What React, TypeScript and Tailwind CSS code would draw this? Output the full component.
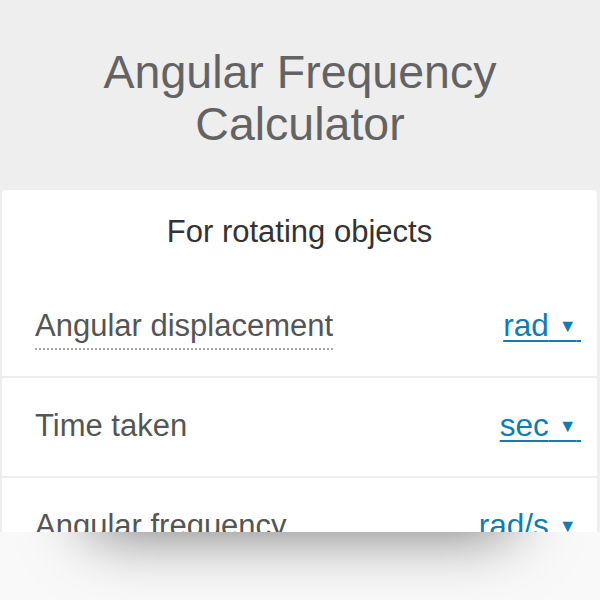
import React from "react";

const font = { fontFamily: '"Liberation Sans", Arial, sans-serif' };

function Row({ label, unit, dotted, last }: { label: string; unit: string; dotted?: boolean; last?: boolean }) {
  return (
    <div className={`flex h-[100px] items-start justify-between pt-[32px] pl-[33px] pr-[16px] ${last ? "" : "border-b-2 border-[#eeeeee]"}`}>
      <span
        className={`text-[31px] leading-none text-[#555555] ${dotted ? "border-b-2 border-dotted border-[#a8a8a8] pb-[7px]" : ""}`}
      >
        {label}
      </span>
      <span className="text-[31.5px] leading-none text-[#0e7cb5] underline underline-offset-[4px] decoration-2 whitespace-nowrap">
        {unit}
        <span className="text-[18px] align-[4px]">{"\u00a0\u00a0▼"}</span>
        <span className="text-[16px]">{"\u00a0"}</span>
      </span>
    </div>
  );
}

export default function App() {
  return (
    <div className="w-[600px] h-[600px] overflow-hidden bg-[#eeeeee]" style={font}>
      {/* header */}
      <div className="pt-[46px] pb-[40px] text-center text-[46.5px] leading-[52px] text-[#636363]">
        Angular Frequency
        <br />
        Calculator
      </div>

      {/* card, cut off at the bottom */}
      <div className="ml-[2px] mr-[3px] h-[342px] overflow-hidden rounded-t-[4px] bg-white">
        <div className="h-[88px] pt-[26px] text-center text-[31px] leading-none text-[#333333]">
          For rotating objects
        </div>
        <Row label="Angular displacement" unit="rad" dotted />
        <Row label="Time taken" unit="sec" />
        <Row label="Angular frequency" unit="rad/s" last />
      </div>

      {/* shadow strip */}
      <div className="relative h-[68px] overflow-hidden bg-[#f9f9f9]">
        <div className="absolute left-[90px] right-[90px] -top-[200px] h-[200px] bg-white shadow-[0_0_60px_0_rgba(0,0,0,0.55)]" />
      </div>
    </div>
  );
}
